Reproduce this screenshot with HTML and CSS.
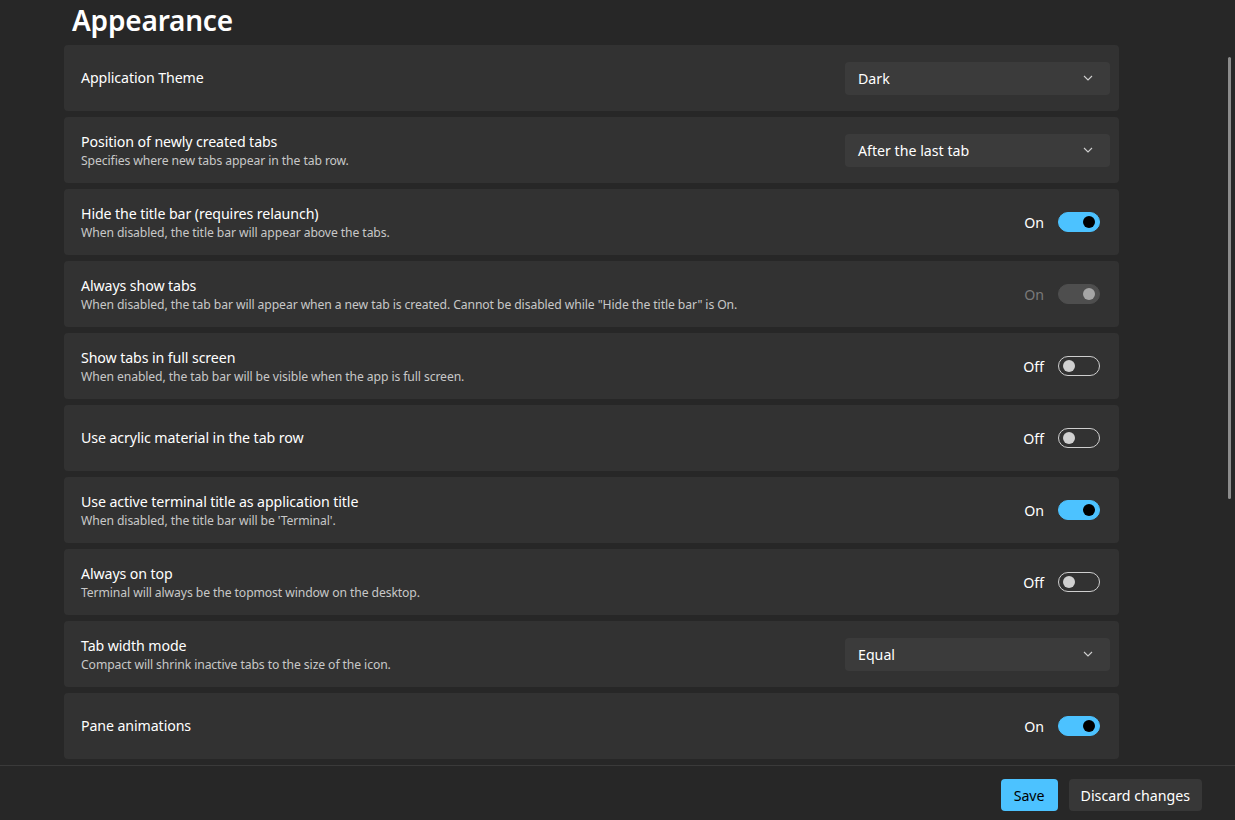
FILE: index.html
```
<!DOCTYPE html>
<html lang="en">
<head>
    <meta charset="UTF-8">
    <title>Appearance</title>
    <link rel="stylesheet" href="styles.css">
</head>
<body>
    <div class="scroller">
        <div class="content">
            <h1>Appearance</h1>

            <div class="card">
                <div class="text"><div class="title">Application Theme</div></div>
                <div class="combo"><span>Dark</span><svg width="10" height="6" viewBox="0 0 10 6"><path d="M1 1l4 4 4-4" fill="none" stroke="#d0d0d0" stroke-width="1.1"/></svg></div>
            </div>

            <div class="card">
                <div class="text">
                    <div class="title">Position of newly created tabs</div>
                    <div class="desc">Specifies where new tabs appear in the tab row.</div>
                </div>
                <div class="combo"><span>After the last tab</span><svg width="10" height="6" viewBox="0 0 10 6"><path d="M1 1l4 4 4-4" fill="none" stroke="#d0d0d0" stroke-width="1.1"/></svg></div>
            </div>

            <div class="card">
                <div class="text">
                    <div class="title">Hide the title bar (requires relaunch)</div>
                    <div class="desc">When disabled, the title bar will appear above the tabs.</div>
                </div>
                <div class="switch"><span class="state">On</span><span class="toggle on"></span></div>
            </div>

            <div class="card">
                <div class="text">
                    <div class="title">Always show tabs</div>
                    <div class="desc">When disabled, the tab bar will appear when a new tab is created. Cannot be disabled while "Hide the title bar" is On.</div>
                </div>
                <div class="switch disabled"><span class="state">On</span><span class="toggle on"></span></div>
            </div>

            <div class="card">
                <div class="text">
                    <div class="title">Show tabs in full screen</div>
                    <div class="desc">When enabled, the tab bar will be visible when the app is full screen.</div>
                </div>
                <div class="switch"><span class="state">Off</span><span class="toggle"></span></div>
            </div>

            <div class="card">
                <div class="text"><div class="title">Use acrylic material in the tab row</div></div>
                <div class="switch"><span class="state">Off</span><span class="toggle"></span></div>
            </div>

            <div class="card">
                <div class="text">
                    <div class="title">Use active terminal title as application title</div>
                    <div class="desc">When disabled, the title bar will be 'Terminal'.</div>
                </div>
                <div class="switch"><span class="state">On</span><span class="toggle on"></span></div>
            </div>

            <div class="card">
                <div class="text">
                    <div class="title">Always on top</div>
                    <div class="desc">Terminal will always be the topmost window on the desktop.</div>
                </div>
                <div class="switch"><span class="state">Off</span><span class="toggle"></span></div>
            </div>

            <div class="card">
                <div class="text">
                    <div class="title">Tab width mode</div>
                    <div class="desc">Compact will shrink inactive tabs to the size of the icon.</div>
                </div>
                <div class="combo"><span>Equal</span><svg width="10" height="6" viewBox="0 0 10 6"><path d="M1 1l4 4 4-4" fill="none" stroke="#d0d0d0" stroke-width="1.1"/></svg></div>
            </div>

            <div class="card">
                <div class="text"><div class="title">Pane animations</div></div>
                <div class="switch"><span class="state">On</span><span class="toggle on"></span></div>
            </div>

            <div class="card"></div>
        </div>
        <div class="scrollbar"></div>
    </div>

    <div class="footer">
        <button class="btn primary">Save</button>
        <button class="btn">Discard changes</button>
    </div>
</body>
</html>
```
FILE: styles.css
```
html, body {
    margin: 0;
    padding: 0;
}
body {
    font-family: 'Noto Sans', 'Open Sans', sans-serif;
    background-color: #272727;
    color: #ffffff;
    width: 1235px;
    height: 820px;
    overflow: hidden;
}
.scroller {
    position: relative;
    height: 765px;
    overflow: hidden;
}
.content {
    width: 1055px;
    margin-left: 64px;
    display: flex;
    flex-direction: column;
    gap: 6px;
}
h1 {
    margin: 0 0 -1px 8px;
    font-size: 28px;
    font-weight: 600;
    line-height: 40px;
    letter-spacing: -0.2px;
}
.card {
    display: flex;
    align-items: center;
    justify-content: space-between;
    height: 66px;
    flex-shrink: 0;
    box-sizing: border-box;
    padding: 0 9px 0 17px;
    background-color: #323232;
    border-radius: 4px;
}
.title {
    font-size: 14.2px;
    line-height: 20px;
    letter-spacing: -0.1px;
}
.desc {
    font-size: 12.2px;
    line-height: 17px;
    color: #c8c8c8;
    letter-spacing: -0.1px;
}
.combo {
    display: flex;
    align-items: center;
    justify-content: space-between;
    width: 265px;
    height: 33px;
    box-sizing: border-box;
    padding: 0 17px 0 13px;
    background-color: #3b3b3b;
    border-radius: 4px;
    font-size: 14.2px;
}
.switch {
    display: flex;
    align-items: center;
    gap: 14px;
    margin-right: 10px;
    font-size: 14.2px;
}
.toggle {
    position: relative;
    width: 42px;
    height: 20px;
    box-sizing: border-box;
    border: 1px solid #cfcfcf;
    border-radius: 10px;
}
.toggle::after {
    content: "";
    position: absolute;
    left: 4px;
    top: 3px;
    width: 12px;
    height: 12px;
    border-radius: 50%;
    background-color: #d0d0d0;
}
.toggle.on {
    background-color: #4cc2ff;
    border-color: #4cc2ff;
}
.toggle.on::after {
    left: auto;
    right: 4px;
    background-color: #000000;
}
.disabled .state {
    color: #7a7a7a;
}
.disabled .toggle.on {
    background-color: #4e4e4e;
    border-color: #4e4e4e;
}
.disabled .toggle.on::after {
    background-color: #a5a5a5;
}
.scrollbar {
    position: absolute;
    left: 1228px;
    top: 57px;
    width: 3px;
    height: 442px;
    border-radius: 2px;
    background-color: #8c8c8c;
}
.footer {
    display: flex;
    justify-content: flex-end;
    align-items: flex-start;
    gap: 11px;
    height: 55px;
    box-sizing: border-box;
    padding: 13px 33px 0 0;
    border-top: 1px solid #3a3a3a;
    background-color: #272727;
}
.btn {
    height: 32px;
    padding: 0 12px;
    border: none;
    border-radius: 4px;
    font-family: inherit;
    font-size: 14.2px;
    color: #ffffff;
    background-color: #373737;
}
.btn.primary {
    background-color: #4cc2ff;
    color: #000000;
    padding: 0 13px;
}
```
